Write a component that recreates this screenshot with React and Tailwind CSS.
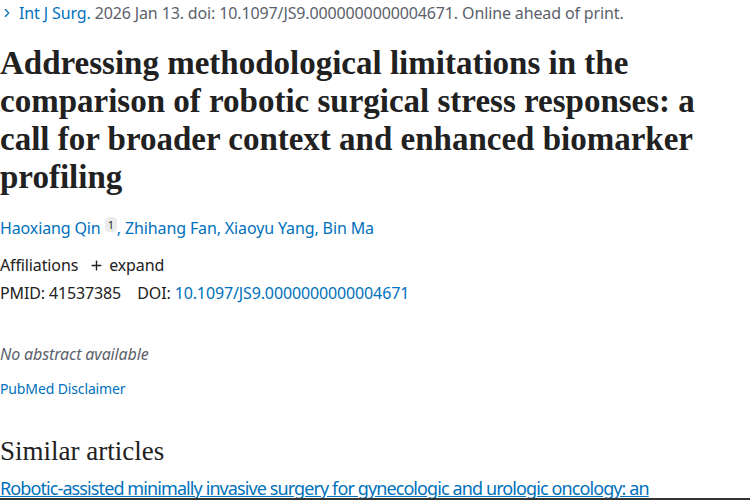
import { Plus, ChevronRight } from 'lucide-react';

const sans = { fontFamily: '"Noto Sans", "Open Sans", sans-serif' };

const ArticleHeader = () => {
    return (
        <div className="w-[750px] h-[500px] overflow-hidden bg-white relative tracking-[-0.13px]" style={sans}>
            <div className="text-[16px] leading-[20px] text-[#5b616b] flex items-center mt-[3px] whitespace-nowrap">
                <ChevronRight size={14} strokeWidth={2} className="text-[#0071bc] mr-[5px]" />
                <span className="text-[#0071bc]">Int J Surg.</span>
                <span>&nbsp;2026 Jan 13. doi: 10.1097/JS9.0000000000004671. Online ahead of print.</span>
            </div>

            <h1
                className="mt-[21px] w-[712px] text-[33px] leading-[38px] font-bold text-[#212121] tracking-normal"
                style={{ fontFamily: '"Liberation Serif", serif' }}
            >
                Addressing methodological limitations in the comparison of robotic surgical stress responses: a call for broader context and enhanced biomarker profiling
            </h1>

            <div className="mt-[21px] text-[16px] leading-[22px] text-[#0071bc] whitespace-nowrap">
                Haoxiang Qin{' '}
                <sup className="text-[11px] text-[#212121] bg-[#ececec] px-[3px] rounded-sm">1</sup>
                <span>, Zhihang Fan, Xiaoyu Yang, Bin Ma</span>
            </div>

            <div className="mt-[15px] text-[16px] leading-[22px] text-[#212121] flex items-center">
                <span>Affiliations</span>
                <Plus size={15} strokeWidth={2.2} className="ml-[11px] mr-[5px]" />
                <span>expand</span>
            </div>

            <div className="mt-[6px] text-[16px] leading-[22px] text-[#212121] whitespace-nowrap">
                PMID: 41537385&nbsp;&nbsp;&nbsp; DOI: <span className="text-[#0071bc]">10.1097/JS9.0000000000004671</span>
            </div>

            <p className="mt-[39px] text-[16px] leading-[22px] italic text-[#5b616b]">No abstract available</p>

            <p className="mt-[14px] text-[14px] leading-[20px] text-[#0071bc]">PubMed Disclaimer</p>

            <h2
                className="mt-[37px] text-[27px] leading-[30px] text-[#212121] tracking-normal"
                style={{ fontFamily: '"Liberation Serif", serif' }}
            >
                Similar articles
            </h2>

            <a className="block mt-[9px] text-[18px] leading-[26px] text-[#0071bc] underline whitespace-nowrap tracking-[-0.9px]">
                Robotic-assisted minimally invasive surgery for gynecologic and urologic oncology: an
            </a>

            <div className="absolute left-0 right-0 bottom-0 h-[2px] bg-[#333]" />
        </div>
    );
};

export default ArticleHeader;
